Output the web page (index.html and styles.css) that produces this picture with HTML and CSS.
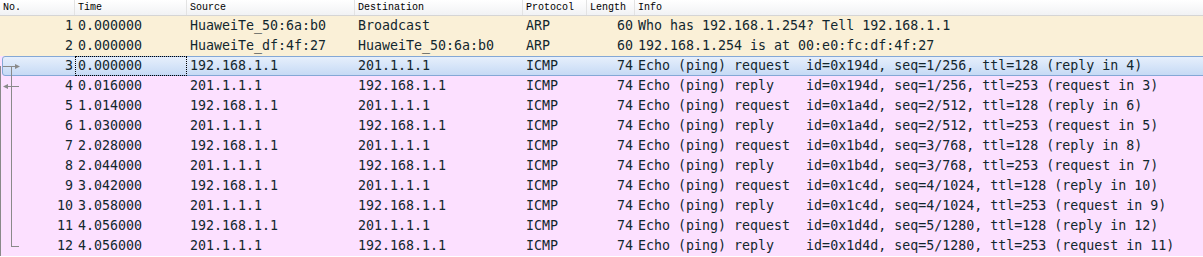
FILE: index.html
```html
<!DOCTYPE html>
<html lang="en">
<head>
    <meta charset="UTF-8">
    <title>Packet List</title>
    <link rel="stylesheet" href="styles.css">
</head>
<body>
    <div class="packet-list">
        <div class="head">
            <div class="hcell">No.</div>
            <div class="hcell">Time</div>
            <div class="hcell">Source</div>
            <div class="hcell">Destination</div>
            <div class="hcell">Protocol</div>
            <div class="hcell">Length</div>
            <div class="hcell">Info</div>
        </div>

        <div class="row arp">
            <div class="cell num">1</div><div class="cell">0.000000</div><div class="cell">HuaweiTe_50:6a:b0</div><div class="cell">Broadcast</div><div class="cell">ARP</div><div class="cell num">60</div><div class="cell">Who has 192.168.1.254? Tell 192.168.1.1</div>
        </div>
        <div class="row arp">
            <div class="cell num">2</div><div class="cell">0.000000</div><div class="cell">HuaweiTe_df:4f:27</div><div class="cell">HuaweiTe_50:6a:b0</div><div class="cell">ARP</div><div class="cell num">60</div><div class="cell">192.168.1.254 is at 00:e0:fc:df:4f:27</div>
        </div>
        <div class="row selected">
            <div class="cell num">3</div><div class="cell focus">0.000000</div><div class="cell">192.168.1.1</div><div class="cell">201.1.1.1</div><div class="cell">ICMP</div><div class="cell num">74</div><div class="cell">Echo (ping) request  id=0x194d, seq=1/256, ttl=128 (reply in 4)</div>
        </div>
        <div class="row icmp">
            <div class="cell num">4</div><div class="cell">0.016000</div><div class="cell">201.1.1.1</div><div class="cell">192.168.1.1</div><div class="cell">ICMP</div><div class="cell num">74</div><div class="cell">Echo (ping) reply    id=0x194d, seq=1/256, ttl=253 (request in 3)</div>
        </div>
        <div class="row icmp">
            <div class="cell num">5</div><div class="cell">1.014000</div><div class="cell">192.168.1.1</div><div class="cell">201.1.1.1</div><div class="cell">ICMP</div><div class="cell num">74</div><div class="cell">Echo (ping) request  id=0x1a4d, seq=2/512, ttl=128 (reply in 6)</div>
        </div>
        <div class="row icmp">
            <div class="cell num">6</div><div class="cell">1.030000</div><div class="cell">201.1.1.1</div><div class="cell">192.168.1.1</div><div class="cell">ICMP</div><div class="cell num">74</div><div class="cell">Echo (ping) reply    id=0x1a4d, seq=2/512, ttl=253 (request in 5)</div>
        </div>
        <div class="row icmp">
            <div class="cell num">7</div><div class="cell">2.028000</div><div class="cell">192.168.1.1</div><div class="cell">201.1.1.1</div><div class="cell">ICMP</div><div class="cell num">74</div><div class="cell">Echo (ping) request  id=0x1b4d, seq=3/768, ttl=128 (reply in 8)</div>
        </div>
        <div class="row icmp">
            <div class="cell num">8</div><div class="cell">2.044000</div><div class="cell">201.1.1.1</div><div class="cell">192.168.1.1</div><div class="cell">ICMP</div><div class="cell num">74</div><div class="cell">Echo (ping) reply    id=0x1b4d, seq=3/768, ttl=253 (request in 7)</div>
        </div>
        <div class="row icmp">
            <div class="cell num">9</div><div class="cell">3.042000</div><div class="cell">192.168.1.1</div><div class="cell">201.1.1.1</div><div class="cell">ICMP</div><div class="cell num">74</div><div class="cell">Echo (ping) request  id=0x1c4d, seq=4/1024, ttl=128 (reply in 10)</div>
        </div>
        <div class="row icmp">
            <div class="cell num">10</div><div class="cell">3.058000</div><div class="cell">201.1.1.1</div><div class="cell">192.168.1.1</div><div class="cell">ICMP</div><div class="cell num">74</div><div class="cell">Echo (ping) reply    id=0x1c4d, seq=4/1024, ttl=253 (request in 9)</div>
        </div>
        <div class="row icmp">
            <div class="cell num">11</div><div class="cell">4.056000</div><div class="cell">192.168.1.1</div><div class="cell">201.1.1.1</div><div class="cell">ICMP</div><div class="cell num">74</div><div class="cell">Echo (ping) request  id=0x1d4d, seq=5/1280, ttl=128 (reply in 12)</div>
        </div>
        <div class="row icmp">
            <div class="cell num">12</div><div class="cell">4.056000</div><div class="cell">201.1.1.1</div><div class="cell">192.168.1.1</div><div class="cell">ICMP</div><div class="cell num">74</div><div class="cell">Echo (ping) reply    id=0x1d4d, seq=5/1280, ttl=253 (request in 11)</div>
        </div>

        <!-- related packet markers -->
        <svg class="tree" width="24" height="241" viewBox="0 0 24 241">
            <g stroke="#8a8a8a" stroke-width="1" fill="none">
                <line x1="0.5" y1="50" x2="0.5" y2="241"/>
                <line x1="11.5" y1="50" x2="11.5" y2="231"/>
                <line x1="3" y1="50.5" x2="16" y2="50.5"/>
                <line x1="6" y1="70.5" x2="19" y2="70.5"/>
                <line x1="11" y1="230.5" x2="19" y2="230.5"/>
            </g>
            <g fill="#8a8a8a">
                <polygon points="15,48 20,50.5 15,53"/>
                <polygon points="8,68 3,70.5 8,73"/>
            </g>
        </svg>
    </div>
</body>
</html>
```

FILE: styles.css
```css
* {
    margin: 0;
    padding: 0;
    box-sizing: border-box;
}

body {
    background: #ffffff;
    overflow: hidden;
}

.packet-list {
    position: relative;
    width: 1203px;
}

.head,
.row {
    display: grid;
    grid-template-columns: 75px 112px 168px 168px 64px 48px 1fr;
}

.head {
    height: 16px;
    background: linear-gradient(#ffffff, #f1f2f4);
    border-bottom: 1px solid #d5d5d5;
}

.hcell {
    font-family: 'Liberation Mono', monospace;
    font-size: 10px;
    line-height: 15px;
    color: #000000;
    padding-left: 3px;
    border-right: 1px solid #e3e3e3;
    white-space: pre;
}

.hcell:last-child {
    border-right: none;
}

.row {
    position: relative;
    height: 20px;
    color: #12272e;
}

.arp {
    background: #faf0d7;
}

.icmp {
    background: #fce0ff;
}

.selected {
    background: #fce0ff;
}

.selected::before {
    content: "";
    position: absolute;
    top: 0;
    bottom: 0;
    left: 2px;
    right: -4px;
    border: 1px solid #84a8d6;
    border-radius: 3px;
    background: linear-gradient(#e6effc, #c6daf5);
}

.cell {
    position: relative;
    font-family: 'DejaVu Sans Mono', monospace;
    font-size: 13.3px;
    line-height: 20px;
    padding-left: 3px;
    white-space: pre;
    overflow: hidden;
}

.cell.num {
    text-align: right;
    padding-left: 0;
    padding-right: 2px;
}

.focus {
    outline: 1px dotted #000000;
    outline-offset: -1px;
    overflow: visible;
}

.tree {
    position: absolute;
    left: 0;
    top: 16px;
}
```
